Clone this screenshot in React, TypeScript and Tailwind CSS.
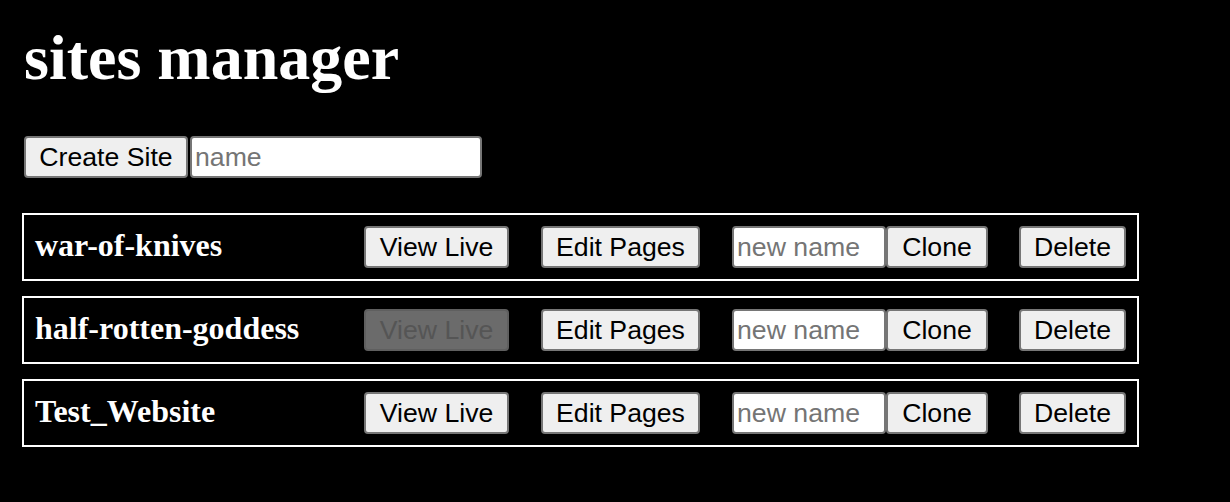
const sites = [
  { name: 'war-of-knives', live: true },
  { name: 'half-rotten-goddess', live: false },
  { name: 'Test_Website', live: true },
]

const btn =
  'h-[42px] rounded-[4px] border-2 border-[#767676] bg-[#efefef] text-black text-[26.67px] leading-none text-center'
const field =
  'h-[42px] rounded-[4px] border-2 border-[#767676] bg-white text-black text-[26.67px] px-[3px] placeholder:text-[#757575] outline-none'

export default function App() {
  return (
    <div className="min-h-[502px] bg-black text-white px-[24px] pt-[21px] font-['Liberation_Sans',Arial,sans-serif]">
      <h1 className="font-['Liberation_Serif','Times_New_Roman',serif] font-bold text-[64px] leading-[74px]">
        sites manager
      </h1>

      {/* create form */}
      <div className="flex mt-[41px]">
        <button className={`${btn} w-[164px]`}>Create Site</button>
        <input className={`${field} w-[292px] ml-[2px]`} placeholder="name" />
      </div>

      {/* site rows */}
      <div className="flex flex-col gap-[15px] mt-[35px] -ml-[2px]">
        {sites.map((site) => (
          <div
            key={site.name}
            className="w-[1117px] border-2 border-white px-[11px] py-[11px] flex items-baseline"
          >
            <span className="w-[297px] font-['Liberation_Serif','Times_New_Roman',serif] font-bold text-[32px] leading-[37px] whitespace-nowrap">
              {site.name}
            </span>
            {site.live ? (
              <button className={`${btn} w-[145px] ml-[32px]`}>View Live</button>
            ) : (
              <button
                disabled
                className="h-[42px] w-[145px] ml-[32px] rounded-[4px] border-2 border-[#5f5f5f] bg-[#6b6b6b] text-[#555555] text-[26.67px] leading-none text-center"
              >
                View Live
              </button>
            )}
            <button className={`${btn} w-[159px] ml-[32px]`}>Edit Pages</button>
            <div className="flex ml-[32px]">
              <input className={`${field} w-[154px]`} placeholder="new name" />
              <button className={`${btn} w-[102px]`}>Clone</button>
            </div>
            <button className={`${btn} w-[107px] ml-[31px]`}>Delete</button>
          </div>
        ))}
      </div>
    </div>
  )
}
